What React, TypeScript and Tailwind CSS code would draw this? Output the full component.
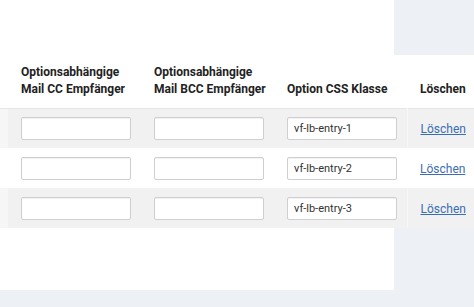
const rows = ["vf-lb-entry-1", "vf-lb-entry-2", "vf-lb-entry-3"];

const inputClass =
  "block h-[23px] w-[110px] rounded-[2px] border border-[#cfcfcf] bg-white px-[6px] text-[11px] text-[#333] shadow-[inset_0_1px_1px_rgba(0,0,0,0.06)] outline-none";

export default function App() {
  return (
    <div
      className="h-[307px] w-[474px] overflow-hidden bg-[#edf1f6]"
      style={{ fontFamily: "Roboto, 'Liberation Sans', sans-serif" }}
    >
      <div className="h-[290px] w-[394px] bg-white pt-[55px]">
        <table className="w-[490px] table-fixed border-collapse">
          <colgroup>
            <col className="w-[8px]" />
            <col className="w-[133px]" />
            <col className="w-[133px]" />
            <col className="w-[133px]" />
            <col className="w-[83px]" />
          </colgroup>
          <thead>
            <tr className="h-[53px] border-b border-[#e6e6e6] bg-white text-left align-bottom text-[12px] font-bold leading-[17px] text-[#222]">
              <th />
              <th className="pb-[10px] pl-[13px]">
                Optionsabhängige
                <br />
                Mail CC Empfänger
              </th>
              <th className="pb-[10px] pl-[13px]">
                Optionsabhängige
                <br />
                Mail BCC Empfänger
              </th>
              <th className="pb-[10px] pl-[13px]">Option CSS Klasse</th>
              <th className="pb-[10px] pl-[13px]">Löschen</th>
            </tr>
          </thead>
          <tbody>
            {rows.map((css, i) => (
              <tr
                key={css}
                className={`h-[40px] ${i % 2 === 0 ? "bg-[#f1f1f1]" : "bg-white"}`}
              >
                <td className={i % 2 === 0 ? "bg-[#f6f6f6]" : ""} />
                <td className="pl-[13px]">
                  <input className={inputClass} defaultValue="" />
                </td>
                <td className="pl-[13px]">
                  <input className={inputClass} defaultValue="" />
                </td>
                <td className="pl-[13px]">
                  <input className={inputClass} defaultValue={css} />
                </td>
                <td
                  className={`pl-[13px] ${i % 2 === 0 ? "border-l border-[#f7f7f7]" : ""}`}
                >
                  <a href="#" className="text-[12px] text-[#3b6db4] underline">
                    Löschen
                  </a>
                </td>
              </tr>
            ))}
          </tbody>
        </table>
      </div>
    </div>
  );
}
